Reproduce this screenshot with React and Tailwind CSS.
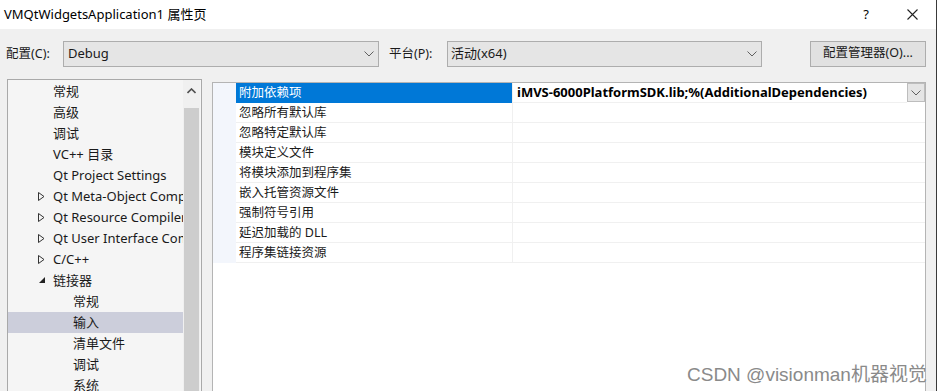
import React from "react";

const FONT = { fontFamily: '"Noto Sans", "Noto Sans CJK SC", sans-serif' };

function Chevron({ className = "" }) {
  return (
    <svg width="10" height="6" viewBox="0 0 10 6" className={className}>
      <path d="M0.5 0.5 L5 5 L9.5 0.5" fill="none" stroke="#606060" strokeWidth="1" />
    </svg>
  );
}

const treeItems = [
  { t: "常规", l: 1 },
  { t: "高级", l: 1 },
  { t: "调试", l: 1 },
  { t: "VC++ 目录", l: 1 },
  { t: "Qt Project Settings", l: 1 },
  { t: "Qt Meta-Object Compiler", l: 1, c: "closed" },
  { t: "Qt Resource Compiler", l: 1, c: "closed" },
  { t: "Qt User Interface Compiler", l: 1, c: "closed" },
  { t: "C/C++", l: 1, c: "closed" },
  { t: "链接器", l: 1, c: "open" },
  { t: "常规", l: 2 },
  { t: "输入", l: 2, sel: true },
  { t: "清单文件", l: 2 },
  { t: "调试", l: 2 },
  { t: "系统", l: 2 },
];

const props = [
  "附加依赖项",
  "忽略所有默认库",
  "忽略特定默认库",
  "模块定义文件",
  "将模块添加到程序集",
  "嵌入托管资源文件",
  "强制符号引用",
  "延迟加载的 DLL",
  "程序集链接资源",
];

export default function App() {
  return (
    <div className="relative w-[943px] h-[391px] bg-white overflow-hidden text-[12.5px] text-[#1a1a1a]" style={FONT}>
      <div className="w-[937px] h-full border-r border-[#3a3a3a] flex flex-col">
        {/* title bar */}
        <div className="h-[29px] bg-white flex items-center shrink-0">
          <span className="pl-[4px] text-[13px] text-black">VMQtWidgetsApplication1 属性页</span>
          <span className="ml-auto mr-[38px] text-[13px] text-black">?</span>
          <svg width="11" height="11" viewBox="0 0 11 11" className="mr-[18px]">
            <path d="M0.5 0.5 L10.5 10.5 M10.5 0.5 L0.5 10.5" stroke="#222" strokeWidth="1.1" />
          </svg>
        </div>
        {/* body */}
        <div className="flex-1 bg-[#f0f0f0] flex flex-col">
          <div className="flex items-center h-[26px] mt-[12px]">
            <span className="ml-[6px] w-[57px]">配置(C):</span>
            <div className="w-[316px] h-[26px] border border-[#adadad] bg-[#e5e5e5] flex items-center pl-[4px] text-[13px]">
              <span>Debug</span>
              <Chevron className="ml-auto mr-[4px]" />
            </div>
            <span className="ml-[10px] w-[58px]">平台(P):</span>
            <div className="w-[315px] h-[26px] border border-[#adadad] bg-[#e5e5e5] flex items-center pl-[3px] text-[13px]">
              <span>活动(x64)</span>
              <Chevron className="ml-auto mr-[4px]" />
            </div>
            <div className="ml-[48px] w-[116px] h-[26px] mt-[-1px] border border-[#adadad] bg-[#e1e1e1] flex items-center justify-center">
              配置管理器(O)...
            </div>
          </div>
          <div className="flex mt-[12px] flex-1">
            {/* tree */}
            <div className="ml-[7px] w-[195px] border border-[#a9a9a9] bg-[#f5f5f5] flex relative overflow-hidden">
              <div className="flex-1 pt-[1px] overflow-hidden text-[13px]">
                {treeItems.map((it, i) => (
                  <div
                    key={i}
                    className={`h-[21px] flex items-center whitespace-nowrap relative ${it.sel ? "bg-[#cccedb]" : ""}`}
                  >
                    {it.c === "closed" && (
                      <svg width="7" height="9" viewBox="0 0 7 9" className="absolute left-[30px] top-[6px]">
                        <path d="M0.5 0.5 L6 4.5 L0.5 8.5 Z" fill="none" stroke="#333" strokeWidth="1" />
                      </svg>
                    )}
                    {it.c === "open" && (
                      <svg width="6" height="6" viewBox="0 0 6 6" className="absolute left-[31px] top-[7px]">
                        <path d="M6 0 L6 6 L0 6 Z" fill="#222" />
                      </svg>
                    )}
                    <span className={it.l === 1 ? "pl-[45px]" : "pl-[65px]"}>{it.t}</span>
                  </div>
                ))}
              </div>
              <div className="w-[17px] bg-[#f0f0f0] flex flex-col items-center shrink-0 mr-[1px]">
                <svg width="9" height="6" viewBox="0 0 9 6" className="mt-[8px]">
                  <path d="M0.5 5 L4.5 1 L8.5 5" fill="none" stroke="#505050" strokeWidth="1.6" />
                </svg>
                <div className="w-[15px] flex-1 mt-[14px] bg-[#cdcdcd]" />
              </div>
            </div>
            {/* property grid */}
            <div className="ml-[10px] mt-[3px] w-[714px] border border-[#b4b4b4] bg-white">
              {props.map((p, i) => (
                <div key={i} className="flex h-[20px]">
                  <div className="w-[23px] bg-[#f3f6fc]" />
                  <div
                    className={`w-[276px] flex items-center pl-[3px] pt-[1px] border-b ${
                      i === 0 ? "bg-[#0078d7] text-white border-[#0078d7]" : "border-[#f0f0f0]"
                    }`}
                  >
                    {p}
                  </div>
                  <div className="flex-1 flex items-center pl-[4px] pt-[1px] border-b border-l border-[#f0f0f0]">
                    {i === 0 && (
                      <span className="font-bold text-black text-[13px]">iMVS-6000PlatformSDK.lib;%(AdditionalDependencies)</span>
                    )}
                  </div>
                  <div className={`w-[18px] ${i === 0 ? "" : "border-b border-[#f0f0f0]"} flex`}>
                    {i === 0 && (
                      <div className="w-[18px] h-[19px] bg-[#e5e5e5] border border-[#bdbdbd] flex items-center justify-center">
                        <Chevron />
                      </div>
                    )}
                  </div>
                </div>
              ))}
            </div>
          </div>
        </div>
      </div>
      <div
        className="absolute left-[687px] top-[361px] text-[19px] text-[#8a8a8a] whitespace-nowrap"
        style={{ fontFamily: '"Liberation Sans", "Noto Sans CJK SC", sans-serif', textShadow: "0 0 1px #fff" }}
      >
        CSDN @visionman机器视觉
      </div>
    </div>
  );
}
